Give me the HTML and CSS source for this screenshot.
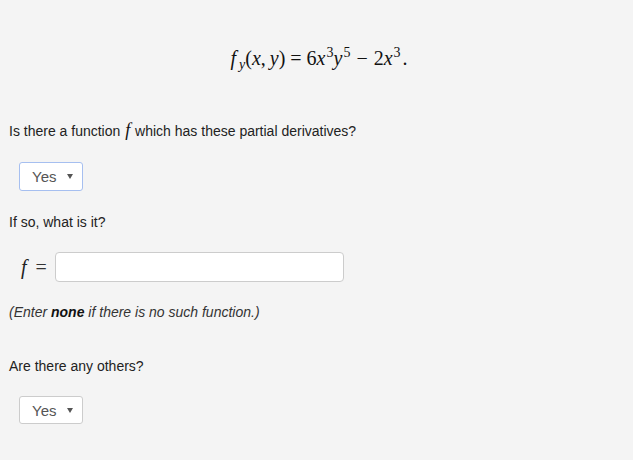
FILE: index.html
```html
<!DOCTYPE html>
<html>
<head>
<meta charset="utf-8">
<link rel="stylesheet" href="styles.css">
</head>
<body>
<div class="page">
  <div class="math-display">
    <span class="mi">f</span><sub class="mi sub">y</sub><span class="mo">(</span><span class="mi">x</span><span class="mo">,</span><span class="mi sp">y</span><span class="mo">)</span><span class="rel">=</span><span class="mn">6</span><span class="mi">x</span><sup class="sup">3</sup><span class="mi">y</span><sup class="sup">5</sup><span class="bin">−</span><span class="mn">2</span><span class="mi">x</span><sup class="sup">3</sup><span class="mo dot">.</span>
  </div>

  <p class="q q1">Is there a function <span class="mi fq">f</span> which has these partial derivatives?</p>

  <div class="select focused"><span class="sel-text">Yes</span><span class="arrow"></span></div>

  <p class="q q2">If so, what is it?</p>

  <div class="input-row">
    <span class="flabel"><span class="mi">f</span><span class="eq">=</span></span>
    <div class="text-input"></div>
  </div>

  <p class="q note">(Enter <b>none</b> if there is no such function.)</p>

  <p class="q q4">Are there any others?</p>

  <div class="select second"><span class="sel-text">Yes</span><span class="arrow"></span></div>
</div>
</body>
</html>
```
FILE: styles.css
```css
html, body {
  margin: 0;
  padding: 0;
  background: #f4f4f4;
}
body {
  font-family: "Liberation Sans", Arial, sans-serif;
  font-size: 14px;
  color: #222;
}
.page {
  padding: 46px 0 0 9px;
}
.math-display {
  height: 24px;
  line-height: 24px;
  text-align: center;
  font-family: "Liberation Serif", "DejaVu Serif", serif;
  font-size: 20px;
  color: #111;
  padding-right: 4px;
  white-space: nowrap;
  overflow: visible;
}
.mi {
  font-style: italic;
  font-family: "Liberation Serif", "DejaVu Serif", serif;
}
.sub {
  font-size: 14px;
  vertical-align: -4px;
  line-height: 0;
  margin-left: 3px;
}
.sup {
  font-size: 14px;
  vertical-align: 8px;
  line-height: 0;
  margin-left: 1px;
}
.sp { margin-left: 4px; }
.rel { margin: 0 5px; }
.bin { margin: 0 6px; }
.dot { margin-left: 2px; }
.q {
  margin: 0;
  line-height: 20px;
}
.q1 { margin-top: 51px; }
.fq {
  font-size: 18px;
  line-height: 0;
  color: #111;
  margin: 0 1px;
}
.select {
  width: 64px;
  height: 29px;
  box-sizing: border-box;
  margin-left: 10px;
  border: 1px solid #ccc;
  border-radius: 3px;
  background: #fff;
  display: flex;
  align-items: center;
  position: relative;
}
.select.focused {
  border-color: #a6bff0;
  margin-top: 21px;
}
.select.second {
  margin-top: 20px;
  height: 28px;
}
.sel-text {
  font-size: 15px;
  color: #555;
  margin-left: 12px;
}
.arrow {
  width: 0;
  height: 0;
  border-left: 3px solid transparent;
  border-right: 3px solid transparent;
  border-top: 5px solid #555;
  margin-left: 11px;
}
.q2 { margin-top: 21px; }
.input-row {
  margin-top: 20px;
  display: flex;
  align-items: center;
  height: 30px;
}
.flabel {
  width: 46px;
  box-sizing: border-box;
  padding-left: 12px;
  font-family: "Liberation Serif", serif;
  font-size: 20px;
  line-height: 20px;
  color: #222;
}
.flabel .eq {
  margin-left: 9px;
  color: #333;
}
.text-input {
  width: 289px;
  height: 30px;
  box-sizing: border-box;
  border: 1px solid #ccc;
  border-radius: 4px;
  background: #fff;
}
.note {
  margin-top: 20px;
  font-style: italic;
  color: #333;
}
.note b {
  color: #111;
}
.q4 { margin-top: 34px; }
```
